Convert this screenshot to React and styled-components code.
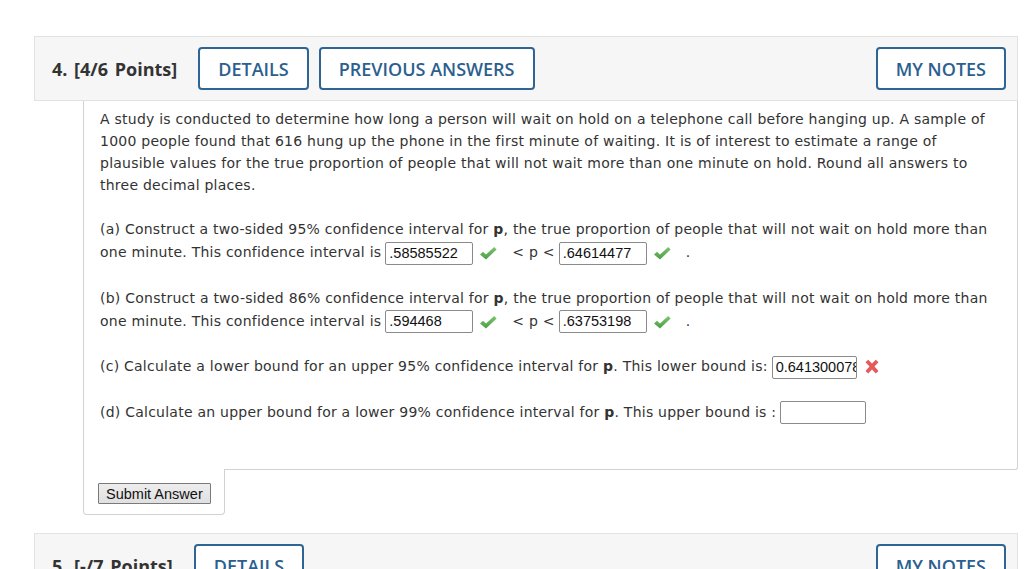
import React from "react";
import styled, { createGlobalStyle } from "styled-components";

const GlobalStyle = createGlobalStyle`
  body {
    margin: 0;
    background: #ffffff;
  }
`;

const Page = styled.div`
  padding: 36px 6px 0 34px;
  height: 569px;
  overflow: hidden;
  box-sizing: border-box;
`;

const Header = styled.div`
  display: flex;
  align-items: center;
  height: 65px;
  box-sizing: border-box;
  padding: 0 11px 0 17px;
  background: #f6f6f6;
  border: 1px solid #e2e2e2;
  gap: 10px;
  margin-top: ${(p) => p.$mt || 0}px;
`;

const Points = styled.div`
  font-family: "Open Sans", sans-serif;
  font-weight: 700;
  font-size: 18px;
  color: #333333;
  margin-right: 11px;
  word-spacing: 2px;
`;

const HeadButton = styled.button`
  height: 43px;
  padding: 0 18px;
  background: #ffffff;
  border: 2px solid #2f6594;
  border-radius: 4px;
  font-family: "Open Sans", sans-serif;
  font-weight: 600;
  font-size: 18px;
  color: #2c5f8f;
  margin-left: ${(p) => (p.$right ? "auto" : "0")};
  cursor: pointer;
`;

const Content = styled.div`
  margin-left: 49px;
  border: 1px solid #d2d2d2;
  border-top: none;
  border-bottom-right-radius: 3px;
  padding: 7px 24px 45px 16px;
  font-family: "DejaVu Sans", Verdana, sans-serif;
  font-size: 14px;
  letter-spacing: 0.24px;
  line-height: 22px;
  color: #333333;
`;

const Para = styled.p`
  margin: 0 0 22px 0;
  line-height: ${(p) => (p.$tall ? "23px" : "22px")};
  &:last-child {
    margin-bottom: 0;
  }
`;

const Answer = styled.span`
  display: inline-block;
  box-sizing: border-box;
  width: ${(p) => p.$w || 88}px;
  height: 23px;
  line-height: 21px;
  vertical-align: middle;
  border: 1px solid #8a8a8a;
  border-radius: 2px;
  padding: 0 3px;
  font-family: "Liberation Sans", Arial, sans-serif;
  font-size: 14.5px;
  letter-spacing: 0;
  color: #111111;
  background: #ffffff;
  white-space: nowrap;
  overflow: hidden;
  margin-left: ${(p) => p.$ml || 0}px;
`;

const Mark = styled.span`
  display: inline-block;
  vertical-align: middle;
  width: 20px;
  height: 18px;
  margin: 0 ${(p) => p.$mr || 0}px 0 ${(p) => p.$ml || 0}px;
  svg {
    display: block;
  }
`;

const SubmitTab = styled.div`
  margin-left: 49px;
  margin-top: -1px;
  width: 142px;
  height: 46px;
  box-sizing: border-box;
  background: #ffffff;
  border: 1px solid #d2d2d2;
  border-top: none;
  border-radius: 0 0 4px 4px;
  padding: 14px 0 0 14px;
  position: relative;
`;

const SubmitButton = styled.button`
  height: 21px;
  padding: 0 7px;
  font-family: "Liberation Sans", Arial, sans-serif;
  font-size: 14.5px;
  color: #111111;
  background: linear-gradient(#ededed, #e0e0e0);
  border: 1px solid #7a7a7a;
  border-radius: 1px;
`;

const Check = () => (
  <svg width="20" height="18" viewBox="0 0 20 18">
    <defs>
      <linearGradient id="cg" x1="0" y1="0" x2="0" y2="1">
        <stop offset="0" stopColor="#7cc56f" />
        <stop offset="1" stopColor="#4a9e45" />
      </linearGradient>
    </defs>
    <path d="M2 10.5 L5 7.8 L8 10.6 L16.2 3 L18.6 5.4 L8 15.6 Z" fill="url(#cg)" />
  </svg>
);

const Cross = () => (
  <svg width="20" height="18" viewBox="0 0 20 18">
    <path
      d="M3.5 4.2 L6.2 1.8 L10 5.6 L13.8 1.8 L16.5 4.2 L12.5 8.6 L16.5 13 L13.8 15.6 L10 11.6 L6.2 15.6 L3.5 13 L7.5 8.6 Z"
      fill="#e35b5b"
    />
  </svg>
);

const App = () => {
  return (
    <Page>
      <GlobalStyle />
      <Header>
        <Points>4. [4/6 Points]</Points>
        <HeadButton>DETAILS</HeadButton>
        <HeadButton>PREVIOUS ANSWERS</HeadButton>
        <HeadButton $right>MY NOTES</HeadButton>
      </Header>
      <Content>
        <Para>
          A study is conducted to determine how long a person will wait on hold on a telephone call
          before hanging up. A sample of 1000 people found that 616 hung up the phone in the first
          minute of waiting. It is of interest to estimate a range of plausible values for the true
          proportion of people that will not wait more than one minute on hold. Round all answers to
          three decimal places.
        </Para>
        <Para $tall>
          (a) Construct a two-sided 95% confidence interval for <b>p</b>, the true proportion of
          people that will not wait on hold more than one minute. This confidence interval is
          <Answer $ml={4}>.58585522</Answer>
          <Mark $ml={5} $mr={14}>
            <Check />
          </Mark>
          &lt; p &lt;
          <Answer $ml={4}>.64614477</Answer>
          <Mark $ml={5} $mr={14}>
            <Check />
          </Mark>
          .
        </Para>
        <Para $tall>
          (b) Construct a two-sided 86% confidence interval for <b>p</b>, the true proportion of
          people that will not wait on hold more than one minute. This confidence interval is
          <Answer $ml={4}>.594468</Answer>
          <Mark $ml={5} $mr={14}>
            <Check />
          </Mark>
          &lt; p &lt;
          <Answer $ml={4}>.63753198</Answer>
          <Mark $ml={5} $mr={14}>
            <Check />
          </Mark>
          .
        </Para>
        <Para $tall>
          (c) Calculate a lower bound for an upper 95% confidence interval for <b>p</b>. This lower
          bound is:
          <Answer $ml={4} $w={85}>0.641300078</Answer>
          <Mark $ml={5}>
            <Cross />
          </Mark>
        </Para>
        <Para $tall>
          (d) Calculate an upper bound for a lower 99% confidence interval for <b>p</b>. This upper
          bound is :
          <Answer $ml={4} $w={86}></Answer>
        </Para>
      </Content>
      <SubmitTab>
        <SubmitButton>Submit Answer</SubmitButton>
      </SubmitTab>
      <Header $mt={18}>
        <Points>5. [-/7 Points]</Points>
        <HeadButton>DETAILS</HeadButton>
        <HeadButton $right>MY NOTES</HeadButton>
      </Header>
    </Page>
  );
};

export default App;
